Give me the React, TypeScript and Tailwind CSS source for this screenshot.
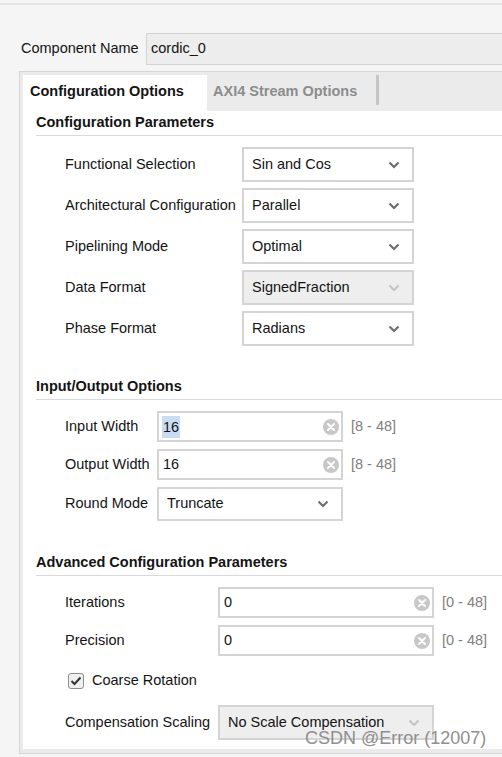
import React from "react";

const Chevron: React.FC<{ disabled?: boolean }> = ({ disabled }) => (
  <svg width="12" height="8" viewBox="0 0 12 8" className="shrink-0">
    <polyline
      points="1.5,1.5 6,6 10.5,1.5"
      fill="none"
      stroke={disabled ? "#c4c4c4" : "#6e6e6e"}
      strokeWidth="2.2"
    />
  </svg>
);

const ClearIcon: React.FC = () => (
  <svg width="16" height="16" viewBox="0 0 16 16" className="shrink-0">
    <circle cx="8" cy="8" r="8" fill="#c8c8c8" />
    <path d="M5 5 L11 11 M11 5 L5 11" stroke="#fff" strokeWidth="2" strokeLinecap="round" />
  </svg>
);

const Select: React.FC<{ value: string; width: string; disabled?: boolean; height?: string }> = ({
  value,
  width,
  disabled,
  height = "h-[35px]",
}) => (
  <div
    className={`${width} ${height} shrink-0 flex items-center justify-between border-2 border-[#d4d4d4] pl-[8px] pr-[12px] ${
      disabled ? "bg-[#eeeeee]" : "bg-white"
    }`}
  >
    <span>{value}</span>
    <Chevron disabled={disabled} />
  </div>
);

const Field: React.FC<{ value: string; width: string; range: string; selected?: boolean }> = ({
  value,
  width,
  range,
  selected,
}) => (
  <div className="flex items-center">
    <div
      className={`${width} h-[31px] shrink-0 flex items-center justify-between border-2 border-[#d4d4d4] bg-white pl-[3px] pr-[2px]`}
    >
      {selected ? (
        <span className="bg-[#cadcf3] leading-[22px] px-[1px]">{value}</span>
      ) : (
        <span className="px-[1px]">{value}</span>
      )}
      <ClearIcon />
    </div>
    <span className="ml-[8px] text-[#808080]">{range}</span>
  </div>
);

const Heading: React.FC<{ title: string }> = ({ title }) => (
  <div>
    <div className="h-[24px] flex items-center font-bold">{title}</div>
    <div className="h-px bg-[#d9d9d9]" />
  </div>
);

const Row: React.FC<{ label: string; labelWidth: string; children: React.ReactNode }> = ({
  label,
  labelWidth,
  children,
}) => (
  <div className="flex items-center">
    <span className={`${labelWidth} shrink-0`}>{label}</span>
    {children}
  </div>
);

export default function App() {
  return (
    <div className="relative h-[757px] w-[502px] overflow-hidden bg-[#f5f5f5] font-['Liberation_Sans',Arial,sans-serif] text-[14.5px] text-[#141414]">
      <div className="mt-[3px] h-[2px] bg-[#e3e3e3]" />

      <div className="mt-[28px] flex items-center pl-[21px]">
        <span className="w-[125px] shrink-0">Component Name</span>
        <div className="h-[32px] w-[420px] shrink-0 flex items-center border border-[#d3d3d3] bg-[#ededed] pl-[4px]">
          cordic_0
        </div>
      </div>

      <div className="mt-[6px] ml-[19px] w-[500px] border border-[#d6d6d6] bg-[#ebebeb] pt-[3px] pb-[4px] pl-[3px]">
        <div className="h-[36px] flex">
          <div className="w-[184px] bg-white font-bold pl-[7px] pb-[2px] flex items-center">
            Configuration Options
          </div>
          <div className="w-[169px] font-bold text-[#8c8c8c] pl-[6px] pb-[2px] flex items-center">
            AXI4 Stream Options
          </div>
          <div className="w-[3px] h-[30px] bg-[#c6c6c6]" />
        </div>

        <div className="h-[638px] bg-white pl-[13px]">
          <Heading title="Configuration Parameters" />
          <div className="pl-[29px] mt-[11px] flex flex-col gap-[6px]">
            <Row label="Functional Selection" labelWidth="w-[177px]">
              <Select value="Sin and Cos" width="w-[172px]" />
            </Row>
            <Row label="Architectural Configuration" labelWidth="w-[177px]">
              <Select value="Parallel" width="w-[172px]" />
            </Row>
            <Row label="Pipelining Mode" labelWidth="w-[177px]">
              <Select value="Optimal" width="w-[172px]" />
            </Row>
            <Row label="Data Format" labelWidth="w-[177px]">
              <Select value="SignedFraction" width="w-[172px]" disabled />
            </Row>
            <Row label="Phase Format" labelWidth="w-[177px]">
              <Select value="Radians" width="w-[172px]" />
            </Row>
          </div>

          <div className="mt-[29px]">
            <Heading title="Input/Output Options" />
          </div>
          <div className="pl-[29px] mt-[11px] flex flex-col gap-[7px]">
            <Row label="Input Width" labelWidth="w-[92px]">
              <Field value="16" width="w-[186px]" range="[8 - 48]" selected />
            </Row>
            <Row label="Output Width" labelWidth="w-[92px]">
              <Field value="16" width="w-[186px]" range="[8 - 48]" />
            </Row>
            <Row label="Round Mode" labelWidth="w-[92px]">
              <Select value="Truncate" width="w-[186px]" height="h-[34px]" />
            </Row>
          </div>

          <div className="mt-[30px]">
            <Heading title="Advanced Configuration Parameters" />
          </div>
          <div className="pl-[29px] mt-[11px] flex flex-col">
            <div className="flex flex-col gap-[7px]">
              <Row label="Iterations" labelWidth="w-[153px]">
                <Field value="0" width="w-[216px]" range="[0 - 48]" />
              </Row>
              <Row label="Precision" labelWidth="w-[153px]">
                <Field value="0" width="w-[216px]" range="[0 - 48]" />
              </Row>
            </div>
            <div className="mt-[17px] ml-[3px] flex items-center h-[16px]">
              <div className="w-[16px] h-[16px] rounded-[3px] border border-[#8e8e8e] bg-[#efefef] flex items-center justify-center">
                <svg width="12" height="10" viewBox="0 0 12 10">
                  <polyline
                    points="1.5,5 4.5,8 10.5,1.5"
                    fill="none"
                    stroke="#333"
                    strokeWidth="2"
                  />
                </svg>
              </div>
              <span className="ml-[8px]">Coarse Rotation</span>
            </div>
            <div className="mt-[16px]">
              <Row label="Compensation Scaling" labelWidth="w-[153px]">
                <Select value="No Scale Compensation" width="w-[216px]" disabled />
              </Row>
            </div>
          </div>
        </div>
      </div>

      <div className="absolute left-[305px] top-[727px] text-[18px] leading-[22px] text-[#8f8f8f]">
        CSDN @Error (12007)
      </div>
    </div>
  );
}
